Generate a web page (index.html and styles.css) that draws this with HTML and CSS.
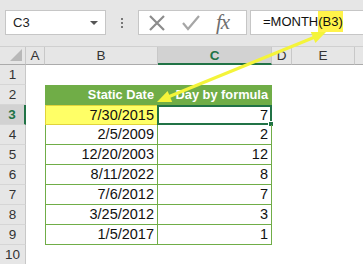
FILE: index.html
```html
<!DOCTYPE html>
<html lang="en">
<head>
    <meta charset="UTF-8">
    <title>MONTH formula</title>
    <link rel="stylesheet" href="styles.css">
</head>
<body>
    <div class="toolbar">
        <div class="name-box">
            <span>C3</span>
            <span class="caret"></span>
        </div>
        <div class="dots"><i></i><i></i><i></i></div>
        <div class="fx-box">
            <svg class="icon" width="18" height="18" viewBox="0 0 18 18">
                <path d="M2 2 L16 16 M16 2 L2 16" stroke="#8c8c8c" stroke-width="2.2" fill="none"/>
            </svg>
            <svg class="icon" width="20" height="18" viewBox="0 0 20 18">
                <path d="M2 9 L7 15 L18 2" stroke="#a6a6a6" stroke-width="2.2" fill="none"/>
            </svg>
            <span class="fx">fx</span>
        </div>
        <div class="formula">=MONTH<span class="mark">(B3)</span></div>
    </div>

    <div class="sheet">
        <!-- column headers -->
        <div class="corner"><span class="tri"></span></div>
        <div class="col-head">A</div>
        <div class="col-head">B</div>
        <div class="col-head active">C</div>
        <div class="col-head">D</div>
        <div class="col-head">E</div>
        <div class="col-head last"></div>

        <!-- row 1 -->
        <div class="row-head">1</div>
        <div></div><div></div><div></div><div></div><div></div><div></div>

        <!-- row 2 -->
        <div class="row-head">2</div>
        <div></div>
        <div class="cell th first">Static Date</div>
        <div class="cell th">Day by formula</div>
        <div></div><div></div><div></div>

        <!-- row 3 -->
        <div class="row-head active">3</div>
        <div></div>
        <div class="cell first marked">7/30/2015</div>
        <div class="cell selected">7<span class="handle"></span></div>
        <div></div><div></div><div></div>

        <div class="row-head">4</div>
        <div></div>
        <div class="cell first">2/5/2009</div>
        <div class="cell">2</div>
        <div></div><div></div><div></div>

        <div class="row-head">5</div>
        <div></div>
        <div class="cell first">12/20/2003</div>
        <div class="cell">12</div>
        <div></div><div></div><div></div>

        <div class="row-head">6</div>
        <div></div>
        <div class="cell first">8/11/2022</div>
        <div class="cell">8</div>
        <div></div><div></div><div></div>

        <div class="row-head">7</div>
        <div></div>
        <div class="cell first">7/6/2012</div>
        <div class="cell">7</div>
        <div></div><div></div><div></div>

        <div class="row-head">8</div>
        <div></div>
        <div class="cell first">3/25/2012</div>
        <div class="cell">3</div>
        <div></div><div></div><div></div>

        <div class="row-head">9</div>
        <div></div>
        <div class="cell first">1/5/2017</div>
        <div class="cell">1</div>
        <div></div><div></div><div></div>

        <div class="row-head">10</div>
        <div></div><div></div><div></div><div></div><div></div><div></div>
    </div>

    <!-- annotation arrow -->
    <svg class="arrow" width="363" height="264" viewBox="0 0 363 264">
        <line x1="168" y1="97" x2="315" y2="37" stroke="#f4f43a" stroke-width="3"/>
        <polygon points="157,102 172.2,102.1 167.6,91.1" fill="#f4f43a"/>
        <polygon points="326,32 315.4,42.9 310.8,31.9" fill="#f4f43a"/>
    </svg>
</body>
</html>
```

FILE: styles.css
```css
* { margin: 0; padding: 0; box-sizing: border-box; }
body {
    font-family: "Liberation Sans", Arial, sans-serif;
    background: white;
    width: 363px;
    height: 264px;
    overflow: hidden;
    position: relative;
}
.toolbar {
    height: 47px;
    background: #e6e6e6;
    display: flex;
    align-items: flex-start;
    padding-top: 10px;
    border-bottom: 1px solid #d0d0d0;
}
.name-box {
    margin-left: 5px;
    width: 101px;
    height: 25px;
    background: white;
    border: 1px solid #c6c6c6;
    display: flex;
    align-items: center;
    justify-content: space-between;
    padding: 0 7px 0 7px;
    font-size: 13px;
    color: #222;
}
.caret {
    width: 0;
    height: 0;
    border-left: 4px solid transparent;
    border-right: 4px solid transparent;
    border-top: 4px solid #555;
}
.dots {
    width: 32px;
    height: 25px;
    display: flex;
    flex-direction: column;
    align-items: center;
    justify-content: center;
    gap: 2px;
}
.dots i { width: 2px; height: 2px; background: #777; }
.fx-box {
    width: 109px;
    height: 25px;
    background: white;
    border: 1px solid #c6c6c6;
    display: flex;
    align-items: center;
    padding-left: 9px;
    gap: 15px;
}
.fx {
    font-family: "Liberation Serif", "DejaVu Serif", serif;
    font-style: italic;
    font-size: 21px;
    line-height: 21px;
    color: #6e6e6e;
    letter-spacing: -1px;
}
.formula {
    margin-left: 3px;
    flex: 1;
    height: 25px;
    background: white;
    border: 1px solid #c6c6c6;
    border-right: none;
    padding-left: 12px;
    font-size: 13px;
    line-height: 22px;
    color: #111;
    white-space: nowrap;
}
.mark { background: #fff34a; display: inline-block; line-height: 21px; }

.sheet {
    display: grid;
    grid-template-columns: 26px 19px 113px 114px 20px 63px 1fr;
    grid-template-rows: 18px repeat(10, 20px);
    font-size: 14.5px;
}
.corner {
    background: #e6e6e6;
    border-right: 1px solid #c8c8c8;
    border-bottom: 1px solid #ababab;
    position: relative;
}
.tri {
    position: absolute;
    right: 3px;
    bottom: 3px;
    width: 0;
    height: 0;
    border-left: 12px solid transparent;
    border-bottom: 12px solid #b8b8b8;
}
.col-head {
    background: #e6e6e6;
    border-right: 1px solid #c8c8c8;
    border-bottom: 1px solid #ababab;
    text-align: center;
    font-size: 13.5px;
    line-height: 17px;
    color: #333;
}
.col-head.active {
    background: #d2d2d2;
    border-bottom: 2px solid #217346;
    color: #217346;
    font-weight: bold;
}
.col-head.last { border-right: none; }
.row-head {
    background: #e6e6e6;
    border-right: 1px solid #c8c8c8;
    border-bottom: 1px solid #d6d6d6;
    text-align: center;
    font-size: 13.5px;
    line-height: 19px;
    color: #333;
}
.row-head.active {
    background: #d2d2d2;
    border-right: 2px solid #217346;
    color: #217346;
    font-weight: bold;
}
.cell {
    border-right: 1px solid #70ad47;
    border-bottom: 1px solid #70ad47;
    text-align: right;
    padding-right: 3px;
    line-height: 19px;
    color: #111;
    position: relative;
}
.cell.first { border-left: 1px solid #70ad47; }
.cell.th {
    background: #70ad47;
    color: white;
    font-weight: bold;
    font-size: 12.8px;
}
.cell.marked {
    background: #ffff66;
    border: 1px solid #e0d43a;
}
.cell.selected {
    border: 2px solid #217346;
    line-height: 17px;
    padding-right: 2px;
    margin-left: -1px;
}
.handle {
    position: absolute;
    right: -4px;
    bottom: -4px;
    width: 6px;
    height: 6px;
    background: #217346;
    border: 1px solid white;
}
.arrow { position: absolute; left: 0; top: 0; pointer-events: none; }
```
